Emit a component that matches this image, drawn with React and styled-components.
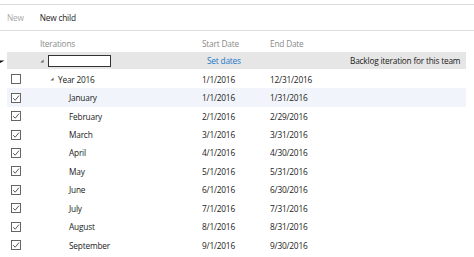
import React from 'react';
import styled, { createGlobalStyle } from 'styled-components';

const GlobalStyle = createGlobalStyle`
	html, body {
		margin: 0;
		padding: 0;
		background: #fff;
		overflow: hidden;
	}
	body {
		font-family: "Open Sans", "Noto Sans", sans-serif;
		font-size: 8.3px;
		letter-spacing: -0.2px;
		color: #1a1a1a;
	}
`;

const months = [
	['January', '1/1/2016', '1/31/2016'],
	['February', '2/1/2016', '2/29/2016'],
	['March', '3/1/2016', '3/31/2016'],
	['April', '4/1/2016', '4/30/2016'],
	['May', '5/1/2016', '5/31/2016'],
	['June', '6/1/2016', '6/30/2016'],
	['July', '7/1/2016', '7/31/2016'],
	['August', '8/1/2016', '8/31/2016'],
	['September', '9/1/2016', '9/30/2016'],
];

function Check({ checked }) {
	return (
		<CheckBox viewBox="0 0 10 10">
			<rect x="0.5" y="0.5" width="9" height="9" fill="#fff" stroke="#555" strokeWidth="0.9" />
			{checked && <path d="M2.2 5.2 L4.2 7.2 L8 2.6" fill="none" stroke="#444" strokeWidth="0.9" />}
		</CheckBox>
	);
}

function Toggle() {
	return (
		<ToggleIcon viewBox="0 0 5 5">
			<path d="M4.5 0.5 L4.5 4.5 L0.5 4.5 Z" fill="#666" />
		</ToggleIcon>
	);
}

function App() {
	return (
		<Page>
			<GlobalStyle />
			<Rule />
			<Toolbar>
				<ToolButton disabled>New</ToolButton>
				<ToolButton>New child</ToolButton>
			</Toolbar>
			<Rule />
			<Table>
				<HeaderRow>
					<span />
					<span>Iterations</span>
					<span>Start Date</span>
					<span>End Date</span>
					<span />
				</HeaderRow>
				<Row $tone="edit">
					<Marker viewBox="0 0 5 5">
						<path d="M0 1.6 L4.5 1.6 L0 4 Z" fill="#111" />
					</Marker>
					<span />
					<Title $indent={0}>
						<Toggle />
						<NameInput />
					</Title>
					<LinkText>Set dates</LinkText>
					<span />
					<span>Backlog iteration for this team</span>
				</Row>
				<Row>
					<Check />
					<Title $indent={10}>
						<Toggle />
						Year 2016
					</Title>
					<span>1/1/2016</span>
					<span>12/31/2016</span>
					<span />
				</Row>
				{months.map(([name, start, end], i) => (
					<Row key={name} $tone={i === 0 ? 'hover' : undefined}>
						<Check checked />
						<Title $indent={29}>{name}</Title>
						<span>{start}</span>
						<span>{end}</span>
						<span />
					</Row>
				))}
			</Table>
		</Page>
	);
}

const Page = styled.div`
	padding-top: 4px;
	width: 474px;
`;

const Rule = styled.div`
	height: 1px;
	background: #dcdcdc;
`;

const Toolbar = styled.div`
	display: flex;
	align-items: center;
	height: 25px;
	padding-left: 7px;
	gap: 16px;
`;

const ToolButton = styled.span`
	color: ${(p) => (p.disabled ? '#a8a8a8' : '#1a1a1a')};
`;

const Table = styled.div`
	margin: 4px 8px 0 7px;
`;

const columns = '33px 162px 68px 80px 1fr';

const HeaderRow = styled.div`
	display: grid;
	grid-template-columns: ${columns};
	align-items: center;
	height: 17px;
	color: #8a8a8a;
`;

const Row = styled.div`
	position: relative;
	display: grid;
	grid-template-columns: ${columns};
	align-items: center;
	height: ${(p) => (p.$tone === 'edit' ? '17px' : '18.45px')};
	margin-bottom: ${(p) => (p.$tone === 'edit' ? '1px' : '0')};
	background: ${(p) =>
		p.$tone === 'edit' ? '#e6e6e6' : p.$tone === 'hover' ? '#f1f5fb' : 'transparent'};
	white-space: nowrap;
`;

const Marker = styled.svg`
	position: absolute;
	left: -7px;
	top: 7px;
	width: 5px;
	height: 5px;
`;

const CheckBox = styled.svg`
	width: 10px;
	height: 10px;
	margin-left: 4px;
`;

const Title = styled.span`
	display: flex;
	align-items: center;
	gap: 4px;
	padding-left: ${(p) => p.$indent}px;
`;

const ToggleIcon = styled.svg`
	width: 4px;
	height: 4px;
`;

const NameInput = styled.div`
	width: 61px;
	height: 10px;
	background: #fff;
	border: 1px solid #333;
`;

const LinkText = styled.span`
	color: #1e78c8;
	padding-left: 5px;
`;

export default App;
